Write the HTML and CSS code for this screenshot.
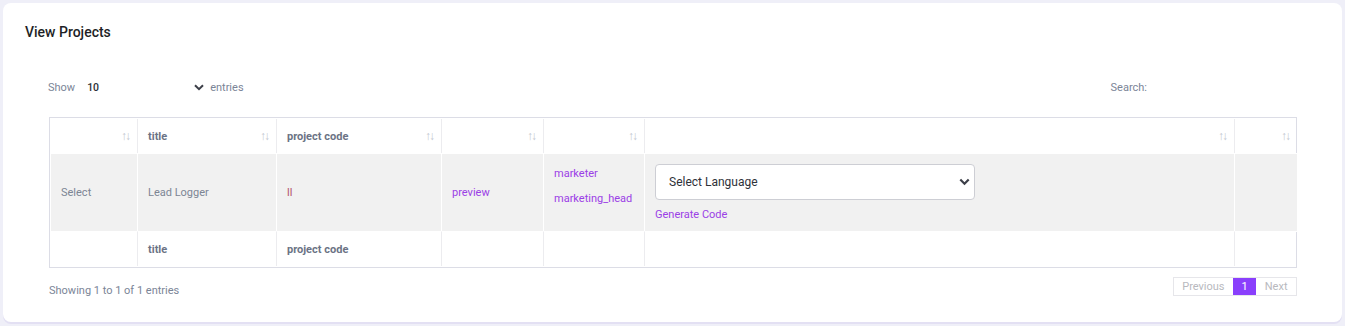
FILE: index.html
```html
<!DOCTYPE html>
<html lang="en">
<head>
<meta charset="utf-8">
<title>View Projects</title>
<link rel="stylesheet" href="styles.css">
</head>
<body>
<div class="card">
  <div class="card-header">View Projects</div>
  <div class="card-body">
    <div class="controls">
      <div class="length">
        <span>Show</span>
        <div class="len-select">
          <span class="len-value">10</span>
          <svg class="chev" width="10" height="7" viewBox="0 0 10 7"><path d="M1 1.2 L5 5.2 L9 1.2" fill="none" stroke="#3c3f48" stroke-width="2"/></svg>
        </div>
        <span>entries</span>
      </div>
      <div class="search">
        <span>Search:</span>
        <span class="search-input"></span>
      </div>
    </div>
    <div class="table-wrap">
      <table class="tbl">
        <colgroup>
          <col class="c1"><col class="c2"><col class="c3"><col class="c4"><col class="c5"><col class="c6"><col class="c7">
        </colgroup>
        <thead>
          <tr>
            <th><div class="th-in"><span></span><span class="sort">↑↓</span></div></th>
            <th><div class="th-in"><span>title</span><span class="sort">↑↓</span></div></th>
            <th><div class="th-in"><span>project code</span><span class="sort">↑↓</span></div></th>
            <th><div class="th-in"><span></span><span class="sort">↑↓</span></div></th>
            <th><div class="th-in"><span></span><span class="sort">↑↓</span></div></th>
            <th><div class="th-in"><span></span><span class="sort">↑↓</span></div></th>
            <th><div class="th-in"><span></span><span class="sort">↑↓</span></div></th>
          </tr>
        </thead>
        <tbody>
          <tr>
            <td class="muted">Select</td>
            <td class="slate">Lead Logger</td>
            <td class="code">ll</td>
            <td class="link">preview</td>
            <td class="link roles"><div>marketer</div><div>marketing_head</div></td>
            <td>
              <div class="lang-select">
                <span>Select Language</span>
                <svg width="11" height="8" viewBox="0 0 11 8"><path d="M1.3 1.5 L5.5 5.7 L9.7 1.5" fill="none" stroke="#3c3f48" stroke-width="2.2"/></svg>
              </div>
              <div class="gen link">Generate Code</div>
            </td>
            <td></td>
          </tr>
        </tbody>
        <tfoot>
          <tr>
            <th></th>
            <th>title</th>
            <th>project code</th>
            <th></th>
            <th></th>
            <th></th>
            <th></th>
          </tr>
        </tfoot>
      </table>
    </div>
    <div class="footer-row">
      <div class="info">Showing 1 to 1 of 1 entries</div>
      <div class="pager">
        <span class="pg">Previous</span>
        <span class="pg active">1</span>
        <span class="pg">Next</span>
      </div>
    </div>
  </div>
</div>
</body>
</html>
```
FILE: styles.css
```css
* { box-sizing: border-box; }
html, body { margin: 0; padding: 0; }
body {
  background: #efeff8;
  font-family: Roboto, "Liberation Sans", Arial, sans-serif;
  padding: 3px 3px 0 3px;
  height: 326px;
}
.card {
  width: 1339px;
  height: 319px;
  background: #ffffff;
  border-radius: 8px;
  box-shadow: 0 2px 0 #e3e0f3;
}
.card-header {
  padding: 17px 22px 32px 22px;
  font-size: 14px;
  line-height: 24px;
  font-weight: 500;
  color: #1e1f26;
  height: 73px;
}
.card-body {
  padding: 0 45px 0 46px;
}
.controls {
  display: flex;
  justify-content: space-between;
  align-items: center;
  height: 22px;
  margin-left: -1px;
  font-size: 11px;
  color: #7b8597;
}
.length {
  display: flex;
  align-items: center;
}
.len-select {
  display: flex;
  align-items: center;
  justify-content: space-between;
  width: 132px;
  padding: 0 4px 0 11px;
  margin: 0 2px 0 1px;
  height: 22px;
}
.len-value {
  color: #2c2f36;
  font-weight: 500;
  font-size: 10.5px;
}
.chev { margin-top: 1px; }
.search {
  display: flex;
  align-items: center;
}
.search-input {
  display: inline-block;
  width: 150px;
  height: 22px;
}
.table-wrap {
  margin-top: 19px;
  border: 1px solid #dcdde6;
  padding: 1px;
}
.tbl {
  width: 100%;
  border-collapse: separate;
  border-spacing: 0;
  table-layout: fixed;
  font-size: 11px;
}
.c1 { width: 87px; }
.c2 { width: 139px; }
.c3 { width: 165px; }
.c4 { width: 102px; }
.c5 { width: 101px; }
.c6 { width: 590px; }
.c7 { width: 62px; }
.tbl th {
  text-align: left;
  font-weight: 700;
  color: #6b7385;
  padding: 0 10px;
  border-right: 1px solid #ececef;
}
.tbl th:last-child, .tbl td:last-child { border-right: none; }
.tbl thead th { height: 34px; padding-right: 8px; }
.tbl tfoot th { height: 35px; border-top: 1px solid #ffffff; }
.th-in {
  display: flex;
  justify-content: space-between;
  align-items: center;
}
.sort {
  font-weight: 400;
  font-size: 12px;
  color: #c3c7d0;
  letter-spacing: -2px;
}
.tbl tbody td {
  background: #f1f1f1;
  height: 78px;
  padding: 0 10px;
  border-right: 1px solid #ffffff;
  border-top: 1px solid #ffffff;
  vertical-align: middle;
  color: #7c8594;
}
.muted { color: #7d8390; }
.slate { color: #7a889e; }
.code { color: #b3536d !important; }
.link { color: #9b40e6 !important; }
.tbl tbody td.roles { padding-bottom: 13px; }
.roles div { line-height: 25px; }
.lang-select {
  width: 320px;
  height: 36px;
  background: #ffffff;
  border: 1px solid #cdced4;
  border-radius: 4px;
  display: flex;
  align-items: center;
  justify-content: space-between;
  padding: 0 4px 0 13px;
  font-size: 12px;
  color: #2f3239;
}
.gen {
  margin-top: 8px;
  font-size: 11px;
}
.footer-row {
  margin-top: 9px;
  display: flex;
  justify-content: space-between;
  align-items: flex-start;
}
.info {
  padding-top: 7px;
  font-size: 11px;
  color: #7b8597;
}
.pager {
  display: flex;
  border: 1px solid #e6e6ea;
  height: 19px;
  font-size: 11px;
}
.pg {
  display: flex;
  align-items: center;
  padding: 0 8.5px;
  color: #b8b9be;
}
.pg.active {
  background: #8a3ffc;
  color: #ffffff;
}
```
